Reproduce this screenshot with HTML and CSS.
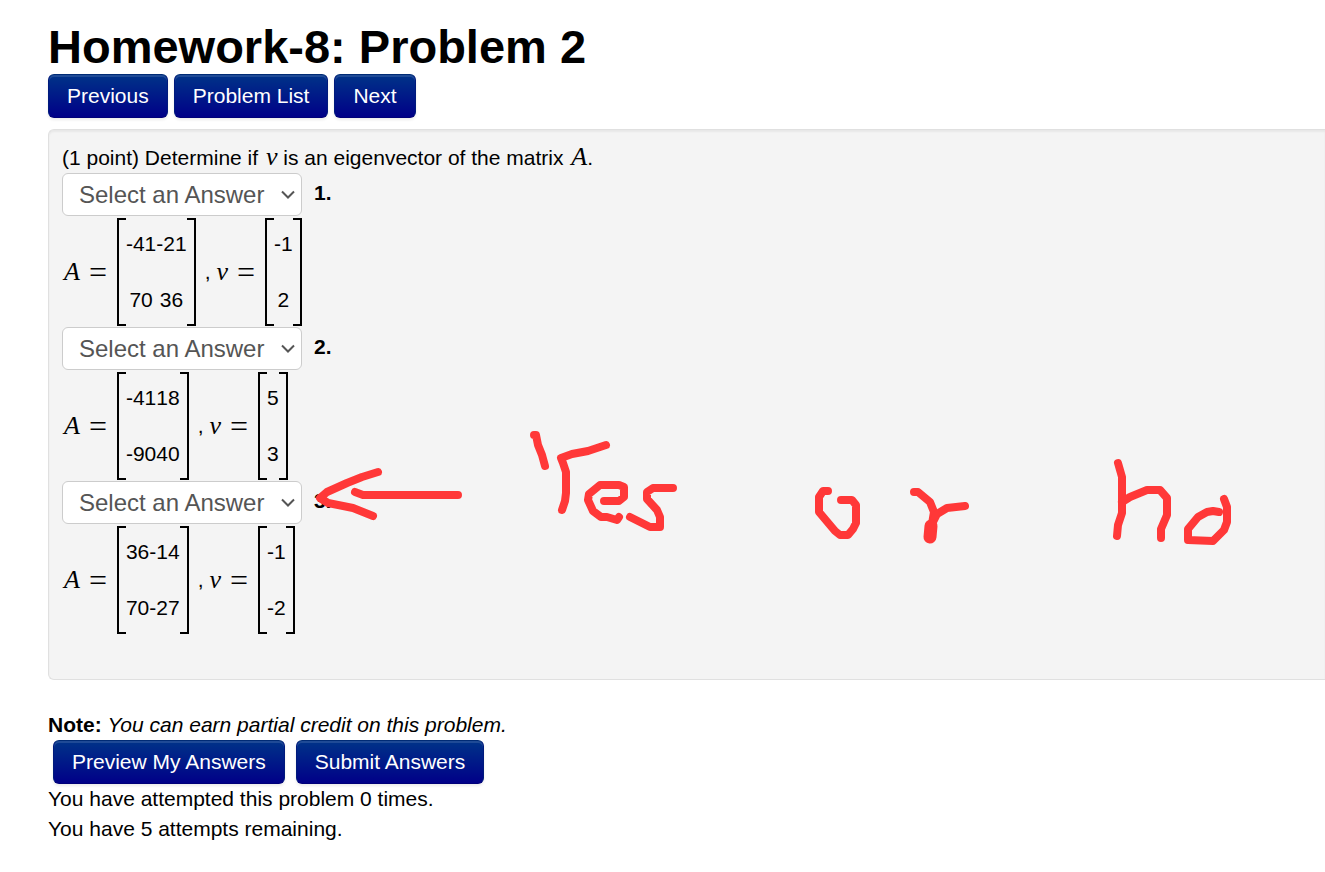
FILE: index.html
```html
<!DOCTYPE html>
<html lang="en">
<head>
<meta charset="utf-8">
<title>Homework-8: Problem 2</title>
<link rel="stylesheet" href="styles.css">
</head>
<body>
<main class="page">
  <h1 class="title">Homework-8: Problem 2</h1>
  <nav class="nav">
    <button class="btn" type="button">Previous</button>
    <button class="btn" type="button">Problem List</button>
    <button class="btn" type="button">Next</button>
  </nav>

  <form id="problem" class="panel">
    <p class="prompt">(1 point) Determine if <i class="var">v</i> is an eigenvector of the matrix <i class="var">A</i>.</p>

    <div class="item">
      <div class="answer">
        <span class="picker">
          <select id="q1" class="select"><option>Select an Answer</option><option>Yes</option><option>No</option></select>
          <svg class="chevron" viewBox="0 0 14 9" aria-hidden="true"><path d="M1 1.5L7 7.5L13 1.5"/></svg>
        </span>
        <label class="number" for="q1">1.</label>
      </div>
      <div class="math">
        <i class="var">A</i><span class="eq">=</span>
        <div class="matrix"><table><tr><td>-41</td><td>-21</td></tr><tr><td>70</td><td>36</td></tr></table></div>
        <span class="comma">,</span><i class="var">v</i><span class="eq">=</span>
        <div class="matrix"><table><tr><td>-1</td></tr><tr><td>2</td></tr></table></div>
      </div>
    </div>

    <div class="item">
      <div class="answer">
        <span class="picker">
          <select id="q2" class="select"><option>Select an Answer</option><option>Yes</option><option>No</option></select>
          <svg class="chevron" viewBox="0 0 14 9" aria-hidden="true"><path d="M1 1.5L7 7.5L13 1.5"/></svg>
        </span>
        <label class="number" for="q2">2.</label>
      </div>
      <div class="math">
        <i class="var">A</i><span class="eq">=</span>
        <div class="matrix"><table><tr><td>-41</td><td>18</td></tr><tr><td>-90</td><td>40</td></tr></table></div>
        <span class="comma">,</span><i class="var">v</i><span class="eq">=</span>
        <div class="matrix"><table><tr><td>5</td></tr><tr><td>3</td></tr></table></div>
      </div>
    </div>

    <div class="item">
      <div class="answer">
        <span class="picker">
          <select id="q3" class="select"><option>Select an Answer</option><option>Yes</option><option>No</option></select>
          <svg class="chevron" viewBox="0 0 14 9" aria-hidden="true"><path d="M1 1.5L7 7.5L13 1.5"/></svg>
        </span>
        <label class="number" for="q3">3.</label>
      </div>
      <div class="math">
        <i class="var">A</i><span class="eq">=</span>
        <div class="matrix"><table><tr><td>36</td><td>-14</td></tr><tr><td>70</td><td>-27</td></tr></table></div>
        <span class="comma">,</span><i class="var">v</i><span class="eq">=</span>
        <div class="matrix"><table><tr><td>-1</td></tr><tr><td>-2</td></tr></table></div>
      </div>
    </div>

    <!-- Freehand pen marks over the panel -->
    <svg class="ink" width="1276" height="550" viewBox="49 130 1276 550" role="img" aria-label="Arrow, then handwritten: Yes or no">
      <polyline points="378,472 362,477 347,483 327,492 320,498 328,503 353,508 363,512 373,516"/>
      <polyline points="355,492 363,495 458,495"/>
      <polyline points="534,435 536,435 538,445 542,455 545,466"/>
      <polyline points="606,445 588,451 572,454 561,458 563,463 566,472 566,493 565,501 562,510"/>
      <polyline points="604,501 619,501 624,497 624,487 619,485 600,485 589,494 588,500 593,511 601,517 607,517 617,520 619,517"/>
      <polyline points="673,488 653,488 647,492 647,499 657,510 660,517 660,527 650,527 640,522 630,517"/>
      <polyline points="828,491 823,491 819,497 819,512 835,531 840,535 848,535 853,529 856,523 856,505 852,500 841,500"/>
      <polyline points="914,492 918,492 930,502 934,512 932,524"/>
      <polyline points="965,506 956,507 947,508 937,514 932,524"/>
      <polyline class="blot" points="931,526 930,537"/>
      <polyline points="1118,463 1122,477 1122,513 1118,525 1117,536"/>
      <polyline points="1122,502 1130,497 1147,490 1160,490 1167,498 1167,515 1161,529 1161,538"/>
      <polyline points="1219,512 1213,511 1207,512 1198,517 1188,529 1188,540 1213,541 1224,530 1227,522 1227,507 1224,499"/>
    </svg>
  </form>

  <p class="note"><b>Note:</b> <i>You can earn partial credit on this problem.</i></p>
  <div class="actions">
    <button class="btn" type="submit" form="problem">Preview My Answers</button>
    <button class="btn" type="submit" form="problem">Submit Answers</button>
  </div>
  <p>You have attempted this problem 0 times.</p>
  <p>You have 5 attempts remaining.</p>
</main>
</body>
</html>
```
FILE: styles.css
```css
body {
  margin: 0;
  background: #fff;
  color: #000;
  font: 21px/30px "Liberation Sans", Arial, sans-serif;
}
.page { padding: 20px 0 28px 48px; }
p { margin: 0; }
.title {
  margin: 0;
  font-size: 47px;
  line-height: 54px;
}
.nav {
  display: flex;
  gap: 6px;
  margin-bottom: 11px;
}
.btn {
  height: 44px;
  padding: 0 18px;
  border: 1px solid;
  border-color: #002b75 #001a7c #000078;
  border-radius: 6px;
  background: linear-gradient(#003388, #000088);
  box-shadow: inset 0 2px 0 rgba(255, 255, 255, 0.12), 0 2px 3px rgba(0, 0, 0, 0.08);
  color: #fff;
  font: inherit;
}
.panel {
  position: relative;
  padding: 13px 13px 44px;
  border: 1px solid #e0e0e0;
  border-right: 0;
  border-radius: 6px 0 0 6px;
  background: #f4f4f4;
  box-shadow: inset 0 2px 2px rgba(0, 0, 0, 0.05);
}
.var {
  margin-left: 2px;
  font-family: "Liberation Serif", "Times New Roman", serif;
  font-size: 26px;
}
.prompt .var { line-height: 24px; }
.item {
  display: flex;
  flex-direction: column;
  gap: 2px;
  margin-bottom: 1px;
}
.answer {
  display: flex;
  gap: 12px;
}
.picker {
  display: grid;
  align-items: center;
}
.select, .chevron { grid-area: 1 / 1; }
.select {
  appearance: none;
  width: 240px;
  height: 43px;
  padding: 0 16px;
  border: 1px solid #ccc;
  border-radius: 6px;
  background: #fff;
  color: #555;
  font: 24px "Liberation Sans", Arial, sans-serif;
}
.chevron {
  width: 14px;
  height: 9px;
  margin-right: 7px;
  justify-self: end;
  fill: none;
  stroke: #555;
  stroke-width: 2;
  pointer-events: none;
}
.number {
  line-height: 40px;
  font-weight: bold;
}
.math {
  display: flex;
  align-items: center;
}
.eq {
  margin: 0 10px 0 9px;
  font: 32px/30px "Liberation Serif", "Times New Roman", serif;
}
.comma { margin: 0 4px 0 9px; }
.matrix {
  display: grid;
  grid-template-columns: 9px auto 9px;
}
.matrix::before, .matrix::after {
  content: "";
  border: solid #000;
  border-width: 2px 0 2px 2px;
}
.matrix::after { border-width: 2px 2px 2px 0; }
.matrix table { border-collapse: collapse; }
.matrix td {
  box-sizing: border-box;
  height: 54px;
  padding: 0 0 2px;
  text-align: center;
}
.matrix tr + tr td { padding: 2px 0 0; }
.ink {
  position: absolute;
  top: 0;
  left: 0;
  fill: none;
  stroke: #ff3838;
  stroke-width: 8;
  stroke-linecap: round;
  stroke-linejoin: round;
  pointer-events: none;
}
.blot { stroke-width: 13; }
.note { margin-top: 30px; }
.actions {
  display: flex;
  gap: 11px;
  padding-left: 5px;
}
```
